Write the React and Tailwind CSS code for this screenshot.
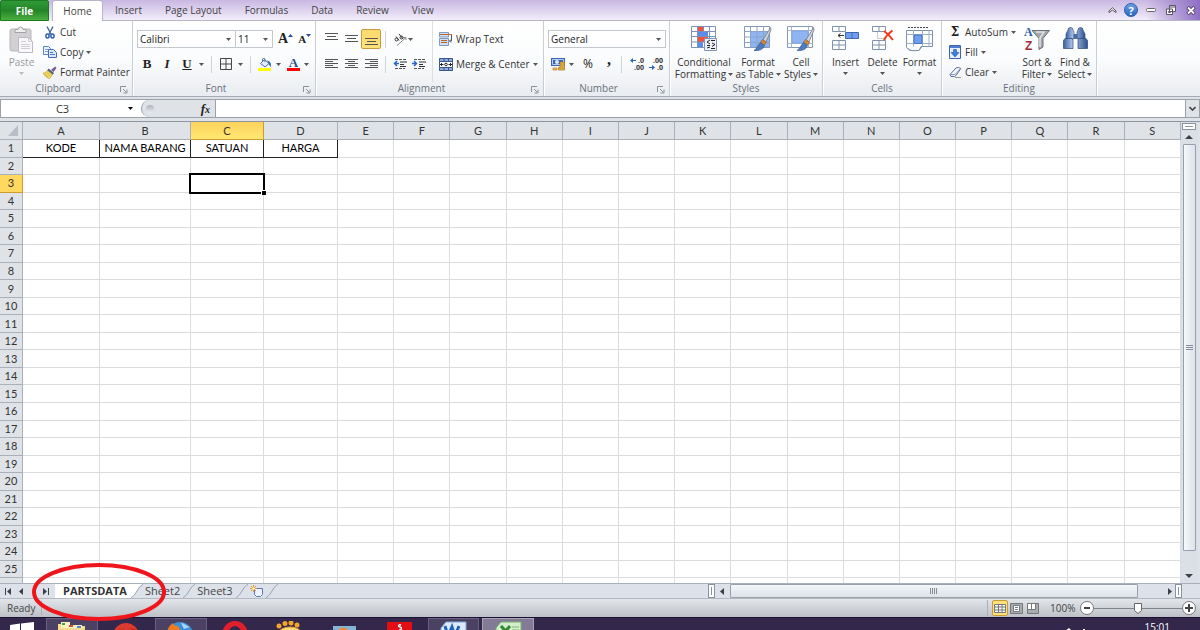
import React from "react";

const UI = "font-['Open_Sans','Noto_Sans',sans-serif]";
const CELL = "font-['Lato','Open_Sans',sans-serif]";

/* ---------- small shared pieces ---------- */

function Caret({ className = "text-[#555]" }) {
  return (
    <svg className={`h-[3px] w-[5px] shrink-0 ${className}`} viewBox="0 0 5 3" fill="currentColor" aria-hidden="true">
      <path d="M0 0h5L2.5 3z" />
    </svg>
  );
}

function Launcher({ label }) {
  return (
    <button aria-label={label} className="absolute right-1 bottom-0 text-[#8a9099]">
      <svg className="h-[8px] w-[8px]" viewBox="0 0 8 8" fill="none" stroke="currentColor">
        <path d="M.5 6V.5H6M3 3l3 3M7 3.5V7H3.5" />
      </svg>
    </button>
  );
}

function Group({ title, launcher, className, children }) {
  return (
    <section aria-label={title} className={`flex shrink-0 flex-col border-r border-[#c9ced5] shadow-[1px_0_0_#fff] ${className}`}>
      <div className="h-[62px]">{children}</div>
      <div className={`relative mb-[2px] flex-1 text-center leading-[12px] text-[#6a717b] ${launcher ? "pr-4" : ""}`}>
        {title}
        {launcher && <Launcher label={`${title} settings`} />}
      </div>
    </section>
  );
}

function Sep() {
  return <span className="h-[17px] w-px shrink-0 bg-[#cfd3d9]" />;
}

function SmallButton({ icon, children, caret, muted }) {
  return (
    <button className={`flex h-5 items-center gap-[3px] whitespace-nowrap ${muted ? "text-[#999]" : "text-[#333]"}`}>
      <span className="flex w-[14px] justify-center">{icon}</span>
      <span>{children}</span>
      {caret && <Caret />}
    </button>
  );
}

function BigButton({ icon, lines, caretBelow, caretInline, className = "", muted }) {
  return (
    <button className={`flex shrink-0 flex-col items-center pt-[5px] whitespace-nowrap leading-[12px] ${muted ? "text-[#9a9a9a]" : "text-[#333]"} ${className}`}>
      <span className="flex h-[30px] items-start">{icon}</span>
      <span>{lines[0]}</span>
      {lines[1] && (
        <span className="flex items-center gap-[2px]">
          {lines[1]}
          {caretInline && <Caret />}
        </span>
      )}
      {caretBelow && <Caret className={muted ? "mt-[4px] text-[#bbb]" : "mt-[4px] text-[#555]"} />}
    </button>
  );
}

/* ---------- ribbon icons ---------- */

const PasteIcon = () => (
  <svg className="h-[28px] w-[25px]" viewBox="0 0 25 28">
    <rect x="1" y="3" width="21" height="22" rx="2" fill="#d3d0d3" stroke="#b9b6ba" />
    <path d="M6 6.500V3.500h3a2.500 2.500 0 0 1 5 0h3v3z" fill="#eee" stroke="#a5a2a7" />
    <path d="M9.500 11.500h10l4 4v11h-14z" fill="#f8f7fa" stroke="#bdb9c2" />
    <path d="M19.500 11.500v4h4M12 15.500h5M12 18.500h9M12 20.500h9M12 22.500h9" fill="none" stroke="#d0cdd5" />
  </svg>
);
const CutIcon = () => (
  <svg className="h-[13px] w-[10px]" viewBox="0 0 10 13" fill="none">
    <path d="M2 .5l4.200 8M8 .5L3.800 8.500" stroke="#4a6a9c" strokeWidth="1.400" />
    <ellipse cx="2.500" cy="10" rx="1.600" ry="2" stroke="#2b5db0" strokeWidth="1.500" />
    <ellipse cx="7.500" cy="10" rx="1.600" ry="2" stroke="#2b5db0" strokeWidth="1.500" />
  </svg>
);
const CopyIcon = () => (
  <svg className="h-[12px] w-[14px]" viewBox="0 0 14 12">
    <path d="M.5.5h5l2 2v6h-7z" fill="#e9f1fc" stroke="#5a84c4" />
    <path d="M2 3.500h3M2 5.500h4" stroke="#7ba0d8" />
    <path d="M5.500 3.500h5l3 3v5h-8z" fill="#d8e7fb" stroke="#3f6db5" />
    <path d="M7 6.500h3M7 8.500h5" stroke="#4c7cc5" />
  </svg>
);
const PainterIcon = () => (
  <svg className="h-[13px] w-[14px]" viewBox="0 0 14 13">
    <path d="M8 4l4-3.500 1.500 1.500-3 4z" fill="#7a5a9a" />
    <path d="M5.500 2.500l5.500 4.500-1.500 2-5.500-4z" fill="#4f5f80" />
    <path d="M4.500 4.500L9.500 8.500l-3 4.200C3.500 11.700 1.500 9.700 0 7 2 7 3.500 6 4.500 4.500z" fill="#f0d964" stroke="#b8952a" strokeWidth=".6" />
    <path d="M2 8l3 3M4 6.500l3 3.500" stroke="#c9a436" strokeWidth=".7" />
  </svg>
);
const BordersIcon = () => (
  <svg className="h-[12px] w-[12px]" viewBox="0 0 12 12" fill="none" stroke="#444">
    <path d="M.5.5h11v11H.5zM6 .5v11M.5 6h11" />
  </svg>
);
const FillColorIcon = () => (
  <svg className="h-[13px] w-[14px]" viewBox="0 0 14 13">
    <path d="M6.500 1.500l4.500 4-4 3.500L2.500 5.500z" fill="#e3edfa" stroke="#4b6ea5" />
    <path d="M4.500 4V1.500a1.200 1.200 0 0 1 2.400 0V4" fill="none" stroke="#556b8d" />
    <path d="M9 2.500c3 .5 4.500 2.500 3.800 6.500-1-1-2-2.500-2.300-3.800z" fill="#2f69bd" />
    <path d="M0 10h13v3H0z" fill="#ff0" />
  </svg>
);
const FontColorIcon = () => (
  <span className="flex w-[13px] flex-col items-center">
    <span className="font-['Liberation_Serif',serif] text-[13px] leading-[10px] font-bold text-[#2d4d8b]">A</span>
    <span className="h-[3px] w-[13px] bg-[#f00]" />
  </span>
);
function Lines({ spans }) {
  return (
    <svg className="h-[10px] w-[13px]" viewBox="0 0 13 10" stroke="#555">
      {spans.map(([a, b], i) => (
        <path key={i} d={`M${a} ${i * 2 + 0.5}H${b}`} />
      ))}
    </svg>
  );
}
const ThreeLines = ({ className = "" }) => (
  <svg className={`h-[8px] w-[13px] ${className}`} viewBox="0 0 13 8" stroke="#555">
    <path d="M0 .5h13M2 3.500h9M0 6.500h13" />
  </svg>
);
const OrientIcon = () => (
  <svg className="h-[13px] w-[13px]" viewBox="0 0 13 13" fill="none" stroke="#333">
    <path d="M3 12.500L12 4.500M12 4.500H9.500M12 4.500V7" stroke="#888" />
    <circle cx="2.500" cy="6.500" r="1.500" />
    <path d="M2 3.500l3 4M5 1l4 5" />
    <circle cx="7.500" cy="4.500" r="1.500" />
  </svg>
);
const IndentIcon = ({ right }) => (
  <svg className="h-[12px] w-[14px]" viewBox="0 0 14 12" fill="none">
    <path d="M2 1.500h12M2 10.500h10" stroke="#555" strokeDasharray="3 1" />
    <path d="M7 4h7M7 6.500h4M7 8.500h6" stroke="#333" />
    <path d={right ? "M0 5.500h4M2 3l2.500 2.500L2 8" : "M1.500 5.500H6M4 3L1.500 5.500 4 8"} stroke="#2b66c4" strokeWidth="1.500" />
  </svg>
);
const WrapIcon = () => (
  <svg className="h-[14px] w-[14px]" viewBox="0 0 14 14" fill="none">
    <path d="M.5.500h9v4.500h-9zM.5 6.500h9v7h-9z" fill="#cfdef4" stroke="#7f9ac4" />
    <path d="M1 2.500h12" stroke="#c4682a" />
    <path d="M2 8.500h6M2 10.500h6" stroke="#b5642f" />
    <path d="M12.500 3v6H10.500M12 7.500L10.500 9l1.500 1.500" stroke="#4d5a6e" />
  </svg>
);
const MergeIcon = () => (
  <svg className="h-[13px] w-[14px]" viewBox="0 0 14 13">
    <path d="M.5.500h13v12H.5z" fill="#fff" stroke="#3b5689" />
    <path d="M0 0h14v4H0zM0 9h14v4H0z" fill="#8eabd9" />
    <path d="M.5.500h13v3H.5zM.5 9.500h13v3H.5zM5 .500v3M9.500.500v3M5 9.500v3M9.500 9.500v3" fill="none" stroke="#3b5689" />
    <path d="M1 6.500h3.500M2.500 5v3M13 6.500H9.500M11.500 5v3" stroke="#222" />
    <circle cx="7" cy="6.500" r="1.300" fill="none" stroke="#222" />
  </svg>
);
const CurrencyIcon = () => (
  <svg className="h-[14px] w-[15px]" viewBox="0 0 15 14">
    <path d="M0 1h14v8H0z" fill="#3a67b4" />
    <path d="M1.500 2.500h11v5h-11z" fill="none" stroke="#b8d0f3" />
    <circle cx="6" cy="5" r="2" fill="#dbe8fa" />
    <path d="M9 5h4.500v8H7.500v-2.500H9z" fill="#e9b743" stroke="#a8751a" strokeWidth=".7" />
    <path d="M9 7h4.500M9 9h4.500M8 11h5.500M2 11h4v2H2z" stroke="#b8832a" fill="#edc45a" strokeWidth=".7" />
  </svg>
);
const DecimalIcon = ({ decrease }) => (
  <span className="relative flex w-[14px] flex-col items-end text-[7px] leading-[7px] font-bold text-[#333]">
    <span>{decrease ? ".00" : ".0"}</span>
    <span>{decrease ? ".0" : ".00"}</span>
    <svg className={`absolute left-0 h-[5px] w-[6px] ${decrease ? "bottom-px" : "top-px"}`} viewBox="0 0 6 5" fill="#2b66c4">
      <path d={decrease ? "M0 2h3V0l3 2.500L3 5V3H0z" : "M6 2H3V0L0 2.500 3 5V3h3z"} />
    </svg>
  </span>
);
const CondIcon = () => (
  <svg className="h-[26px] w-[27px]" viewBox="0 0 27 26">
    <path d="M.5.500h24v21H.5z" fill="#fff" stroke="#7b92b8" />
    <path d="M7 1h6v5H7zM7 11h10v5H7z" fill="#f0503c" />
    <path d="M7 6h10v5H7zM7 16h5v5H7z" fill="#5b8de8" />
    <path d="M.5 5.500h24M.5 10.500h24M.5 16h24M6.500.500v21M12.500.500v5M18.500.500v21" fill="none" stroke="#7b92b8" />
    <path d="M13.500 12.500h12v12h-12z" fill="#edf2fa" stroke="#8695af" />
    <path d="M19 14l-3 2 3 2M16 19.500h3M21 17l3 1.500-3 2M20 22.500h4M20 14.500h4M16 22l3-1" fill="none" stroke="#222" />
  </svg>
);
const Brush = () => (
  <g>
    <path d="M26.500 1.500L19 14l3 2 5-12z" fill="#cfd3da" stroke="#6e7a8c" strokeWidth=".8" />
    <path d="M18.500 13.500l4 3-2.500 3-3.500-3z" fill="#d08a3e" stroke="#935a22" strokeWidth=".7" />
    <path d="M16.500 16.500l4 3c-1.500 4-5 5.500-10.500 5 3-1.500 3.500-5 6.500-8z" fill="#4e7bc0" stroke="#345995" strokeWidth=".7" />
  </g>
);
const TableIcon = () => (
  <svg className="h-[26px] w-[28px]" viewBox="0 0 28 26">
    <path d="M.5.500h25v21H.5z" fill="#fff" stroke="#8898b2" />
    <path d="M7 5h18v16H7z" fill="#8fb4f2" />
    <path d="M.5 5.500h25M.5 11h25M.5 16.500h25M6.500.500v21M13 .500v21M19.500.500v21" fill="none" stroke="#8ca3c8" />
    <Brush />
  </svg>
);
const CellStyleIcon = () => (
  <svg className="h-[26px] w-[28px]" viewBox="0 0 28 26">
    <path d="M.5.500h25v21H.5z" fill="#fff" stroke="#8898b2" />
    <path d="M.5 4.500h25M.5 17.500h25M4.500.500v21M21.500.500v21" fill="none" stroke="#a7b5cc" />
    <path d="M5 5h16v12H5z" fill="#8fb4f2" stroke="#7ea3e4" />
    <Brush />
  </svg>
);
const InsertIcon = () => (
  <svg className="h-[25px] w-[27px]" viewBox="0 0 27 25" fill="#fff" stroke="#8192ad">
    <path d="M.5.500h13v5H.5zM7 .500v5M.5 14.500h13v9H.5zM.5 19h13M7 14.500v9" />
    <path d="M13.500 6.500h13v6h-13z" fill="#6f9df0" stroke="#3f66ae" />
    <path d="M20 6.500v6" stroke="#3f66ae" />
    <path d="M12 9.500H6M8.500 7.500L6 9.500l2.500 2" fill="none" stroke="#333" />
  </svg>
);
const DeleteIcon = () => (
  <svg className="h-[25px] w-[22px]" viewBox="0 0 22 25" fill="#fff" stroke="#8192ad">
    <path d="M.5.500h13v5H.5zM7 .500v5M.5 14.500h13v9H.5zM.5 19h13M7 14.500v9" />
    <path d="M5.500 6.500v6h7" fill="none" stroke="#999" strokeDasharray="1 1" />
    <path d="M12 5c3 2 6 5 9 9M20.500 4.500C17 7 14 10 12 14" fill="none" stroke="#ee3b20" strokeWidth="2" />
  </svg>
);
const FormatIcon = () => (
  <svg className="h-[27px] w-[27px]" viewBox="0 0 27 27" fill="#fff" stroke="#8192ad">
    <path d="M2 1.500h21" stroke="#444" strokeDasharray="2 1" />
    <path d="M.5 4.500h26v16H15l-2 4H4l-3.500-3z" />
    <path d="M.5 8.500h26M.5 17.500h26M7.500 4.500v16M16.500 4.500v16M23 4.500v16" fill="none" stroke="#9fb0cc" />
    <path d="M8 9h8v8.500H8z" fill="#6f9df0" stroke="#4a74c4" />
    <path d="M2 22.500c3 3 7 2 11 2l3-4" fill="none" />
  </svg>
);
const FillIcon = () => (
  <svg className="h-[14px] w-[12px]" viewBox="0 0 12 14">
    <path d="M.5.500h11v13H.5z" fill="#e6effc" stroke="#3d66ad" />
    <path d="M1 1h10v2H1z" fill="#4f7fd0" />
    <path d="M4.500 4.500h3v3H10L6 12 2 7.500h2.500z" fill="#3d7be0" stroke="#2a57a8" strokeWidth=".6" />
  </svg>
);
const ClearIcon = () => (
  <svg className="h-[11px] w-[13px]" viewBox="0 0 13 11">
    <path d="M1 7.500L7 1c1-.7 4-.6 4.800.5L7 8.500 5.500 9.500H2z" fill="#f4f5fb" stroke="#5c6c90" />
    <path d="M1 7.500h5l5.500-6" fill="none" stroke="#8a98b8" />
    <path d="M6 10.500h6" stroke="#999" />
  </svg>
);
const SortIcon = () => (
  <svg className="h-[26px] w-[26px]" viewBox="0 0 26 26">
    <path d="M8 4.500h17.500L19 12.500v8.500l-4 2.500V12.500z" fill="#a3a7ad" stroke="#6d7178" />
    <path d="M12 6h8l-4 6v9" fill="none" stroke="#e1e3e6" strokeWidth="1.500" />
    <text x="0" y="10" fontSize="12" fontWeight="700" fill="#2f5ba9" fontFamily="Liberation Serif, serif">A</text>
    <text x="1" y="24" fontSize="12" fontWeight="700" fill="#a12c34" fontFamily="Liberation Sans, sans-serif">Z</text>
  </svg>
);
const FindIcon = () => (
  <svg className="h-[24px] w-[25px]" viewBox="0 0 25 24">
    <defs>
      <linearGradient id="bino" x1="0" x2="1">
        <stop offset="0" stopColor="#3a5f9e" />
        <stop offset=".4" stopColor="#b7cdf0" />
        <stop offset="1" stopColor="#2c4f8c" />
      </linearGradient>
    </defs>
    <path d="M5 4a2.500 2.500 0 0 1 5 0l1 2v7H3V8zM15 4a2.500 2.500 0 0 1 5 0l2 4v5h-8V6z" fill="url(#bino)" stroke="#33507f" strokeWidth=".7" />
    <path d="M10.500 8h4v5h-4z" fill="#4c6ca5" />
    <path d="M2 12.500h7l1 2v8H.5v-8zM16 12.500h7l1.500 2v8H15v-8z" fill="url(#bino)" stroke="#2b467a" strokeWidth=".7" />
  </svg>
);

/* ---------- title / tabs ---------- */

const TABS = ["Insert", "Page Layout", "Formulas", "Data", "Review", "View"];

function TabStrip() {
  return (
    <header className="flex h-[21px] shrink-0 bg-linear-to-b from-[#c9b7e2] to-[#f4f0fa] text-[#444]">
      <nav className="flex items-stretch" aria-label="Ribbon tabs">
        <button className="mr-[3px] w-[49px] rounded-t-[2px] border border-[#1d7a23] bg-linear-to-b from-[#2f9a35] via-[#238529] to-[#4cb03f] font-bold text-white">File</button>
        <button className="relative z-10 w-[51px] rounded-t-[3px] border border-b-0 border-[#b9b3c9] bg-white">Home</button>
        {TABS.map((t) => (
          <button key={t} className="border-b border-[#b5b8c4] pr-[11px] pl-3">{t}</button>
        ))}
      </nav>
      <div className="flex flex-1 items-center justify-end gap-[11px] border-b border-[#b5b8c4] pr-2">
        <button aria-label="Minimize ribbon">
          <svg className="h-[6px] w-[9px]" viewBox="0 0 9 6" fill="#fff" stroke="#555"><path d="M1 4l3.500-3.300L8 4v1.500L4.500 3 1 5.500z" /></svg>
        </button>
        <button aria-label="Help" className="-ml-1 flex size-[14px] items-center justify-center rounded-full border border-[#2a5caa] bg-linear-to-b from-[#6ba0e6] to-[#2b66bd] text-[11px] leading-none font-bold text-white">?</button>
      </div>
      <div className="flex items-center justify-end gap-[10px] border-b border-[#b5b8c4] bg-linear-to-r from-transparent to-[#8f6fc4] pr-1">
        <button aria-label="Minimize window">
          <svg className="h-[4px] w-[10px]" viewBox="0 0 10 4"><rect x=".5" y=".5" width="9" height="3" rx="1" fill="#fff" stroke="#666" /></svg>
        </button>
        <button aria-label="Restore window">
          <svg className="h-[10px] w-[10px]" viewBox="0 0 10 10" fill="#fff" stroke="#5b5468"><path d="M3.500.500h6v6h-6zM3.500 2h6M.5 4h6v5.500h-6zM2.500 6.500h2v1h-2z" /></svg>
        </button>
        <button aria-label="Close window">
          <svg className="h-[9px] w-[10px]" viewBox="0 0 10 9"><path d="M1.500 1l7 7M8.500 1l-7 7" stroke="#4e3d70" strokeWidth="3.600" /><path d="M2 1.500l6 6M8 1.500l-6 6" stroke="#fff" strokeWidth="1.800" /></svg>
        </button>
      </div>
    </header>
  );
}

/* ---------- ribbon ---------- */

const iconBtn = "flex h-5 shrink-0 items-center justify-center";

function Combo({ label, value, className }) {
  return (
    <label className={`relative flex h-[18px] shrink-0 items-center border border-[#c3c7ce] bg-white ${className}`}>
      <select aria-label={label} defaultValue={value} className="h-4 w-full appearance-none bg-transparent pl-[2px] text-[#222] outline-none">
        <option>{value}</option>
      </select>
      <span className="pointer-events-none absolute right-1 flex"><Caret /></span>
    </label>
  );
}

function Ribbon() {
  return (
    <div className="flex h-[76px] shrink-0 overflow-hidden border-b border-[#a4abb5] bg-linear-to-b from-white via-[#fbfcfd] to-[#e9ecf0]">
      <Group title="Clipboard" launcher className="w-[133px]">
        <div className="flex gap-1 pl-1">
          <BigButton muted className="w-[35px]" icon={<PasteIcon />} lines={["Paste"]} caretBelow />
          <div className="flex flex-col pt-px">
            <SmallButton icon={<CutIcon />}>Cut</SmallButton>
            <SmallButton icon={<CopyIcon />} caret>Copy</SmallButton>
            <SmallButton icon={<PainterIcon />}>Format Painter</SmallButton>
          </div>
        </div>
      </Group>

      <Group title="Font" launcher className="w-[183px]">
        <div className="flex flex-col gap-[5px] pt-2 pl-1">
          <div className="flex h-5 items-center">
            <Combo label="Font family" value="Calibri" className="w-[99px]" />
            <Combo label="Font size" value="11" className="-ml-px w-[38px]" />
            <button aria-label="Grow font" className={`${iconBtn} ml-[5px] font-['Liberation_Serif',serif] text-[14px] font-bold text-[#222]`}>
              A<Caret className="mb-2 rotate-180 text-[#2b4f9b]" />
            </button>
            <button aria-label="Shrink font" className={`${iconBtn} ml-[5px] font-['Liberation_Serif',serif] text-[11px] font-bold text-[#222]`}>
              A<Caret className="mb-2 text-[#2b4f9b]" />
            </button>
          </div>
          <div className="flex h-5 items-center font-['Liberation_Serif',serif] text-[13px] text-[#222]">
            <button aria-label="Bold" className={`${iconBtn} w-5 font-bold`}>B</button>
            <button aria-label="Italic" className={`${iconBtn} w-5 font-bold italic`}>I</button>
            <button aria-label="Underline" className={`${iconBtn} w-5 font-bold underline`}>U</button>
            <button aria-label="Underline styles" className={`${iconBtn} w-[9px]`}><Caret /></button>
            <span className="mr-2 ml-[5px] flex w-px"><Sep /></span>
            <button aria-label="Borders" className={`${iconBtn} gap-[6px]`}><BordersIcon /><Caret /></button>
            <span className="mx-[7px] flex w-px"><Sep /></span>
            <button aria-label="Fill color" className={`${iconBtn} gap-1`}><FillColorIcon /><Caret /></button>
            <button aria-label="Font color" className={`${iconBtn} ml-[6px] gap-1`}><FontColorIcon /><Caret /></button>
          </div>
        </div>
      </Group>

      <Group title="Alignment" launcher className="w-[228px]">
        <div className="flex">
          <div className="flex w-[117px] flex-col gap-[5px] border-r border-[#dcdfe4] pt-2 pb-2 pl-[5px]">
            <div className="flex h-5 items-center">
              <button aria-label="Top align" className={`${iconBtn} w-5`}><ThreeLines className="mb-[5px]" /></button>
              <button aria-label="Middle align" className={`${iconBtn} w-5`}><ThreeLines /></button>
              <button aria-label="Bottom align" aria-pressed="true" className={`${iconBtn} w-5 rounded-[2px] border border-[#c79a3a] bg-linear-to-b from-[#fbd96e] to-[#ffe27a]`}><ThreeLines className="mt-[5px]" /></button>
              <span className="mr-2 ml-1 flex"><Sep /></span>
              <button aria-label="Orientation" className={`${iconBtn} gap-px`}><OrientIcon /><Caret /></button>
            </div>
            <div className="flex h-5 items-center">
              <button aria-label="Align left" className={`${iconBtn} w-5`}><Lines spans={[[0, 13], [0, 8], [0, 13], [0, 8], [0, 13]]} /></button>
              <button aria-label="Center" className={`${iconBtn} w-5`}><Lines spans={[[0, 13], [3, 10], [0, 13], [3, 10], [0, 13]]} /></button>
              <button aria-label="Align right" className={`${iconBtn} w-5`}><Lines spans={[[0, 13], [5, 13], [0, 13], [5, 13], [0, 13]]} /></button>
              <span className="mr-[7px] ml-1 flex"><Sep /></span>
              <button aria-label="Decrease indent" className={iconBtn}><IndentIcon /></button>
              <button aria-label="Increase indent" className={`${iconBtn} ml-[5px]`}><IndentIcon right /></button>
            </div>
          </div>
          <div className="flex flex-col gap-[5px] pt-2 pl-[6px]">
            <SmallButton icon={<WrapIcon />}>Wrap Text</SmallButton>
            <SmallButton icon={<MergeIcon />} caret>Merge &amp; Center</SmallButton>
          </div>
        </div>
      </Group>

      <Group title="Number" launcher className="w-[126px]">
        <div className="flex flex-col gap-[5px] pt-2 pl-1">
          <div className="flex h-5 items-center"><Combo label="Number format" value="General" className="w-[118px]" /></div>
          <div className="flex h-5 items-center pl-[3px] text-[#222]">
            <button aria-label="Currency" className={`${iconBtn} gap-[3px]`}><CurrencyIcon /><Caret /></button>
            <button aria-label="Percent" className={`${iconBtn} ml-2 w-[12px] text-[12px]`}>%</button>
            <button aria-label="Comma style" className={`${iconBtn} ml-2 w-[14px] pb-2 font-['Liberation_Serif',serif] text-[16px] font-bold`}>,</button>
            <span className="mr-2 ml-[5px] flex"><Sep /></span>
            <button aria-label="Increase decimal" className={iconBtn}><DecimalIcon /></button>
            <button aria-label="Decrease decimal" className={`${iconBtn} ml-[5px]`}><DecimalIcon decrease /></button>
          </div>
        </div>
      </Group>

      <Group title="Styles" className="w-[153px]">
        <div className="flex pl-1">
          <BigButton className="w-[60px]" icon={<CondIcon />} lines={["Conditional", "Formatting"]} caretInline />
          <BigButton className="w-[48px]" icon={<TableIcon />} lines={["Format", "as Table"]} caretInline />
          <BigButton className="w-[38px]" icon={<CellStyleIcon />} lines={["Cell", "Styles"]} caretInline />
        </div>
      </Group>

      <Group title="Cells" className="w-[119px]">
        <div className="flex pl-1">
          <BigButton className="w-[37px]" icon={<InsertIcon />} lines={["Insert"]} caretBelow />
          <BigButton className="w-[37px]" icon={<DeleteIcon />} lines={["Delete"]} caretBelow />
          <BigButton className="w-[37px]" icon={<FormatIcon />} lines={["Format"]} caretBelow />
        </div>
      </Group>

      <Group title="Editing" className="w-[155px]">
        <div className="flex pl-[6px]">
          <div className="flex w-[70px] flex-col pt-px">
            <SmallButton caret icon={<span className="font-['DejaVu_Serif',serif] text-[12px] font-bold text-[#222]">Σ</span>}>AutoSum</SmallButton>
            <SmallButton caret icon={<FillIcon />}>Fill</SmallButton>
            <SmallButton caret icon={<ClearIcon />}>Clear</SmallButton>
          </div>
          <BigButton className="w-[38px]" icon={<SortIcon />} lines={["Sort &", "Filter"]} caretInline />
          <BigButton className="w-[38px]" icon={<FindIcon />} lines={["Find &", "Select"]} caretInline />
        </div>
      </Group>
    </div>
  );
}

/* ---------- formula bar ---------- */

function FormulaBar() {
  return (
    <div className="flex h-[25px] shrink-0 border-b border-[#8f959e] bg-[#dfe3e8] pt-[2px] pb-[3px]">
      <div className="flex w-[141px] items-center border-t border-b border-l border-[#9aa1ab] bg-white">
        <input aria-label="Name box" defaultValue="C3" className="w-[123px] bg-transparent text-center text-[11px] text-[#333] outline-none" />
        <button aria-label="Named ranges" className="pl-1"><Caret className="text-black" /></button>
      </div>
      <div className="flex w-[74px] items-center justify-between border-t border-b border-[#9aa1ab] bg-white">
        <div className="flex h-full w-full items-center justify-between rounded-l-full border-l border-[#9aa1ab] bg-[#dfe3e8] pr-[5px] pl-1">
          <span className="size-[8px] rounded-full bg-linear-to-b from-[#aeb3ba] to-[#eceef1]" />
          <button aria-label="Insert function" className="font-['Liberation_Serif',serif] text-[13px] leading-none font-bold text-[#222] italic">
            f<span className="text-[10px]">x</span>
          </button>
        </div>
      </div>
      <input aria-label="Formula" className="min-w-0 flex-1 border border-[#9aa1ab] bg-white px-1 text-[11px] outline-none" />
      <button aria-label="Expand formula bar" className="flex w-[14px] items-center justify-center border border-l-0 border-[#9aa1ab] bg-[#dfe3e8]">
        <svg className="h-[5px] w-[7px]" viewBox="0 0 7 5" fill="none" stroke="#444" strokeWidth="1.600"><path d="M.5 1l3 3 3-3" /></svg>
      </button>
    </div>
  );
}

/* ---------- sheet ---------- */

const COLS = "ABCDEFGHIJKLMNOPQRS".split("");
const ROWS = Array.from({ length: 26 }, (_, i) => i + 1);
const HEADINGS = { A: "KODE", B: "NAMA BARANG", C: "SATUAN", D: "HARGA" };

function Sheet() {
  return (
    <div className="min-w-0 flex-1 overflow-hidden">
      <table className={`h-[474px] w-full table-fixed border-separate border-spacing-0 text-[11px] leading-[14px] ${CELL}`}>
        <colgroup>
          <col className="w-[23px]" />
          <col className="w-[77px]" />
          <col className="w-[91px]" />
          <col className="w-[73px]" />
          <col className="w-[74px]" />
        </colgroup>
        <thead>
          <tr className="h-[18px] text-[#333]">
            <th aria-label="Select all" className="border-r border-b border-[#a9b0ba] bg-[#dfe3e8] p-0">
              <svg className="ml-auto h-[11px] w-[14px] pr-1" viewBox="0 0 10 10" preserveAspectRatio="none" fill="#b9bec6"><path d="M10 0v10H0z" /></svg>
            </th>
            {COLS.map((c) => (
              <th key={c} scope="col" className={c === "C"
                ? "border-r border-b border-[#d09b2f] bg-linear-to-b from-[#fdd25c] to-[#ffe872] p-0 font-normal"
                : "border-r border-b border-[#a9b0ba] bg-[#dfe3e8] p-0 font-normal"}>{c}</th>
            ))}
          </tr>
        </thead>
        <tbody>
          {ROWS.map((r) => (
            <tr key={r}>
              <th scope="row" aria-label={`Row ${r}`} className={r === 3
                ? "border-r border-b border-[#d09b2f] bg-[#ffd95f] p-0 font-normal text-[#333]"
                : "border-r border-b border-[#a9b0ba] bg-[#dfe3e8] p-0 font-normal text-[#333]"}>{r < ROWS.length ? r : "\u00a0"}</th>
              {COLS.map((c) => {
                const heading = r === 1 && HEADINGS[c];
                return (
                  <td key={c} className={heading
                    ? "border-r border-b border-[#222] p-0 text-center whitespace-nowrap text-black"
                    : "relative border-r border-b border-[#dadcdd] p-0"}>
                    {heading}
                    {r === 3 && c === "C" && (
                      <span className="absolute -top-[2px] -right-[2px] -bottom-[2px] -left-[2px] z-10 border-2 border-black">
                        <span className="absolute -right-[3px] -bottom-[3px] size-[5px] border-t border-l border-white bg-black" />
                      </span>
                    )}
                  </td>
                );
              })}
            </tr>
          ))}
        </tbody>
      </table>
    </div>
  );
}

const Tri = ({ d, className = "h-[7px] w-[4px]", box = "0 0 4 7" }) => (
  <svg className={className} viewBox={box} fill="#3c4148"><path d={d} /></svg>
);

function VerticalScroll() {
  return (
    <div className="flex w-[19px] shrink-0 flex-col items-center border-r-2 border-[#dfe3e8] bg-[#dbe0e8] pr-px">
      <span className="mt-px flex h-[7px] w-[14px] shrink-0 items-center justify-center border border-[#8c929b] bg-white"><span className="h-px w-2 bg-[#8c929b]" /></span>
      <button aria-label="Scroll up" className="flex h-[14px] shrink-0 items-center"><Tri d="M0 4h8L4 0z" className="h-[4px] w-[8px]" box="0 0 8 4" /></button>
      <span className="flex w-[13px] flex-1 flex-col items-center justify-center gap-px rounded-[1px] border border-[#98a0ac] bg-linear-to-r from-[#f6f8fa] to-[#dde2ea]">
        <span className="h-px w-[7px] bg-[#858c97]" />
        <span className="h-px w-[7px] bg-[#858c97]" />
        <span className="h-px w-[7px] bg-[#858c97]" />
      </span>
      <button aria-label="Scroll down" className="mt-[18px] flex h-[14px] shrink-0 items-center"><Tri d="M0 0h8L4 4z" className="h-[4px] w-[8px]" box="0 0 8 4" /></button>
    </div>
  );
}

function Slant({ active }) {
  return (
    <svg className="h-[14px] w-[17px] shrink-0" viewBox="0 0 17 14" fill="none">
      {active && <path d="M0 0h15C10 2 8 12 3 14H0z" fill="#fff" />}
      <path d="M3 13.500C8 12 10 2 15 .5" stroke="#9aa1ab" />
    </svg>
  );
}

function SheetBar() {
  return (
    <div className="flex h-[15px] shrink-0 items-stretch border-t border-[#a9b0ba] bg-[#dce1ea] text-[11px] leading-[14px] text-[#444]">
      <div className="flex w-[55px] items-center gap-[10px] pl-[5px]">
        <button aria-label="First sheet"><Tri d="M0 0h1v7H0zM6 0v7L2 3.500z" className="h-[7px] w-[6px]" box="0 0 6 7" /></button>
        <button aria-label="Previous sheet" className="-ml-[2px]"><Tri d="M4 0v7L0 3.500z" /></button>
        <button aria-label="Last sheet" className="ml-[10px]"><Tri d="M0 0v7l4-3.500zM5 0h1v7H5z" className="h-[7px] w-[6px]" box="0 0 6 7" /></button>
      </div>
      <div className="relative flex items-stretch">
        <button className="bg-white pr-px pl-2 font-bold text-[#333]">PARTSDATA</button>
        <Slant active />
        <svg className="pointer-events-none absolute -top-[22px] -left-[24px] z-20 h-[60px] w-[136px]" viewBox="0 0 136 60" fill="none" stroke="#ee161c" strokeWidth="4" aria-hidden="true">
          <ellipse cx="68" cy="30" rx="65" ry="27" />
        </svg>
      </div>
      <button>Sheet2</button>
      <Slant />
      <button>Sheet3</button>
      <Slant />
      <button aria-label="Insert sheet">
        <svg className="h-[12px] w-[13px]" viewBox="0 0 13 12"><path d="M4.500 3.500h8v6l-2 2h-4l-2-2z" fill="#eef3fb" stroke="#5a78b5" /><path d="M3.500 0v7M0 3.500h7M1 1l5 5M6 1L1 6" stroke="#e79b2b" /><circle cx="3.500" cy="3.500" r="1.200" fill="#fff" /></svg>
      </button>
      <Slant />
      <div className="flex flex-1 justify-end">
        <span className="flex w-[7px] items-center justify-center border border-[#8c929b] bg-white"><span className="h-2 w-px bg-[#8c929b]" /></span>
        <div className="flex w-1/2 items-stretch">
          <button aria-label="Scroll left" className="flex w-[15px] items-center justify-center"><Tri d="M4 0v7L0 3.500z" /></button>
          <span className="flex flex-1 items-center justify-center gap-px rounded-[1px] border border-[#98a0ac] bg-linear-to-b from-[#f3f5f8] to-[#dde2ea]">
            <span className="h-[6px] w-px bg-[#858c97]" />
            <span className="h-[6px] w-px bg-[#858c97]" />
            <span className="h-[6px] w-px bg-[#858c97]" />
            <span className="h-[6px] w-px bg-[#858c97]" />
          </span>
          <button aria-label="Scroll right" className="ml-[26px] flex w-[11px] items-center justify-center"><Tri d="M0 0v7l4-3.500z" /></button>
        </div>
        <span className="mr-[18px] flex w-[7px] items-center justify-center border border-[#8c929b] bg-white"><span className="h-2 w-px bg-[#8c929b]" /></span>
      </div>
    </div>
  );
}

function StatusBar() {
  return (
    <footer className="flex h-[19px] shrink-0 items-center border-t border-[#b3b9c2] bg-linear-to-b from-[#e2e5e9] to-[#bdc1c7] text-[#444]">
      <span className="w-[42px] border-r border-[#a9afb8] pl-[7px]">Ready</span>
      <div className="ml-auto flex items-center border-l border-[#a9afb8] pr-1 pl-1">
        <button aria-label="Normal view" className="flex h-[16px] w-[16px] items-center justify-center rounded-[2px] border border-[#c79a3a] bg-[#ffe27a]">
          <svg className="h-[9px] w-[12px]" viewBox="0 0 12 9" fill="#fff" stroke="#777"><path d="M.5.500h11v8H.5zM4.500.500v8M8 .500v8M.5 3h11M.5 6h11" /></svg>
        </button>
        <button aria-label="Page layout view" className="ml-[2px]">
          <svg className="h-[11px] w-[13px]" viewBox="0 0 13 11" fill="#a9adb3" stroke="#777"><path d="M.5.500h12v10H.5z" /><path d="M3.500 2.500h6v6h-6zM5 4.500h3M5 6.500h3" fill="#fff" /></svg>
        </button>
        <button aria-label="Page break view" className="ml-[4px]">
          <svg className="h-[11px] w-[12px]" viewBox="0 0 12 11" fill="#a9adb3" stroke="#777"><path d="M.5.500h11v10H.5z" /><path d="M.5.500h4v6h-4zM4.500.500h4v6h-4z" fill="#fff" /></svg>
        </button>
        <span className="ml-[11px] w-[30px]">100%</span>
        <button aria-label="Zoom out" className="flex size-[14px] items-center justify-center rounded-full border border-[#777] bg-white"><span className="h-[2px] w-[6px] bg-[#444]" /></button>
        <label className="relative flex h-[14px] w-[88px] items-center">
          <span className="h-px w-full bg-[#7f858d]" />
          <input type="range" aria-label="Zoom" min="0" max="100" defaultValue="50" className="absolute inset-0 w-full opacity-0" />
          <svg className="pointer-events-none absolute left-[40px] h-[11px] w-[8px]" viewBox="0 0 8 11" fill="#fff" stroke="#666"><path d="M.5.500h7v7l-3.500 3-3.500-3z" /></svg>
        </label>
        <button aria-label="Zoom in" className="flex size-[14px] items-center justify-center rounded-full border border-[#777] bg-white">
          <svg className="size-[8px]" viewBox="0 0 8 8" stroke="#444" strokeWidth="2"><path d="M4 0v8M0 4h8" /></svg>
        </button>
      </div>
    </footer>
  );
}

/* ---------- taskbar ---------- */

const TASKS = [
  { name: "Explorer", open: "border-[#6a6182] bg-[#4b4162]", art: <g><path d="M0 3h11l2 2h14v20H0z" fill="#f3dc8b" /><path d="M3 1h9v3h12v3H3z" fill="#fbf2c4" /><path d="M4 2h3v2H4z" fill="#41a541" /><path d="M11 4h4v2h-4z" fill="#d54b3e" /><path d="M19 5h4v2h-4z" fill="#4a86d8" /></g> },
  { name: "Chrome", art: <g><circle cx="13" cy="15" r="13" fill="#dc3a2e" /><path d="M7 9c3-3 9-3 12 0l6 1C20 6 8 6 4 10z" fill="#b62a22" /><path d="M0 13l7-3 2 6z" fill="#3da349" /></g> },
  { name: "Firefox", open: "border-[#6a6182] bg-[#4b4162]", art: <g><circle cx="13" cy="14" r="13" fill="#3b8fd9" /><path d="M0 14C0 7 3 4 6 2c0 2 2 3 5 3l2 3-4 6z" fill="#ee7a22" /><path d="M14 2c4 0 5 3 9 4l-6 2z" fill="#a6d5f5" /></g> },
  { name: "Opera", art: <g><ellipse cx="13" cy="14" rx="13" ry="14" fill="#e01f2b" /><ellipse cx="13" cy="14" rx="7" ry="9" fill="#34274c" /></g> },
  { name: "Paw", art: <g fill="#f3a62a"><ellipse cx="3" cy="5" rx="2.500" ry="2.500" /><ellipse cx="9" cy="2.500" rx="2.500" ry="2.500" /><ellipse cx="15" cy="2" rx="2.500" ry="2.500" /><ellipse cx="21" cy="4" rx="2.500" ry="2.500" /><ellipse cx="14" cy="12" rx="11" ry="6" fill="#fbd983" stroke="#f3a62a" /></g> },
  { name: "Viewer", art: <g><path d="M2 5h23v20H2z" fill="#86b4d6" /><circle cx="12" cy="12" r="5.500" fill="#e98f33" /></g> },
  { name: "Reader", art: <g><path d="M1 1h25v20H1z" fill="#e30d14" /><path d="M15 4c-3-1-3 2-1 2s2 3-1 3" fill="none" stroke="#fff" strokeWidth="1.500" /></g> },
  { name: "Word", open: "border-[#6a6182] bg-[#4b4162]", art: <g><path d="M6 1h20v20H1V7z" fill="#dfeaf9" stroke="#7ea5dd" /><path d="M5 5l3 10 4-9 3 9 4-10" fill="none" stroke="#1f62be" strokeWidth="3" /></g> },
  { name: "Excel", open: "border-[#a9a2b8] bg-[#837b95]", art: <g><path d="M6 1h20v20H1V7z" fill="#d3edcd" stroke="#79b36d" /><path d="M6 5l9 10M15 5L6 15" fill="none" stroke="#2f8a34" strokeWidth="3" /><path d="M17 6h7M17 9h7" stroke="#7dbb73" /></g> },
];

function Taskbar() {
  return (
    <div className="flex h-[13px] shrink-0 overflow-hidden border-t border-[#1b1233] bg-[#34274c]">
      <button aria-label="Start" className="flex w-[46px] items-start pt-[4px] pl-[10px]">
        <svg className="h-[24px] w-[24px] shrink-0" viewBox="0 0 24 24" fill="#fff"><path d="M0 3l10-1.500V11H0zM11 1.400L24 0v11H11zM0 12h10v9L0 20zM11 12h13v12l-13-2z" /></svg>
      </button>
      <div className="grid w-[488px] grid-cols-9 gap-x-[3px]">
        {TASKS.map((t) => (
          <button key={t.name} aria-label={t.name} className={`flex h-[30px] justify-center border pt-[2px] ${t.open || "border-transparent"}`}>
            <svg className="h-[26px] w-[27px]" viewBox="0 0 27 26">{t.art}</svg>
          </button>
        ))}
      </div>
      <div className="ml-auto flex gap-14 pr-[30px] text-white">
        <svg className="mt-[9px] h-[6px] w-[24px]" viewBox="0 0 24 6" fill="#fff"><path d="M0 4l4-3 3 3v2H0zM18 2h2v4h-2z" /></svg>
        <span className="pt-[3px] leading-[12px]">15:01</span>
      </div>
    </div>
  );
}

export default function App() {
  return (
    <div className={`flex h-screen flex-col overflow-hidden bg-[#dfe3e8] text-[10px] leading-[14px] ${UI}`}>
      <TabStrip />
      <Ribbon />
      <FormulaBar />
      <main className="flex min-h-0 flex-1 bg-white">
        <Sheet />
        <VerticalScroll />
      </main>
      <SheetBar />
      <StatusBar />
      <Taskbar />
    </div>
  );
}
